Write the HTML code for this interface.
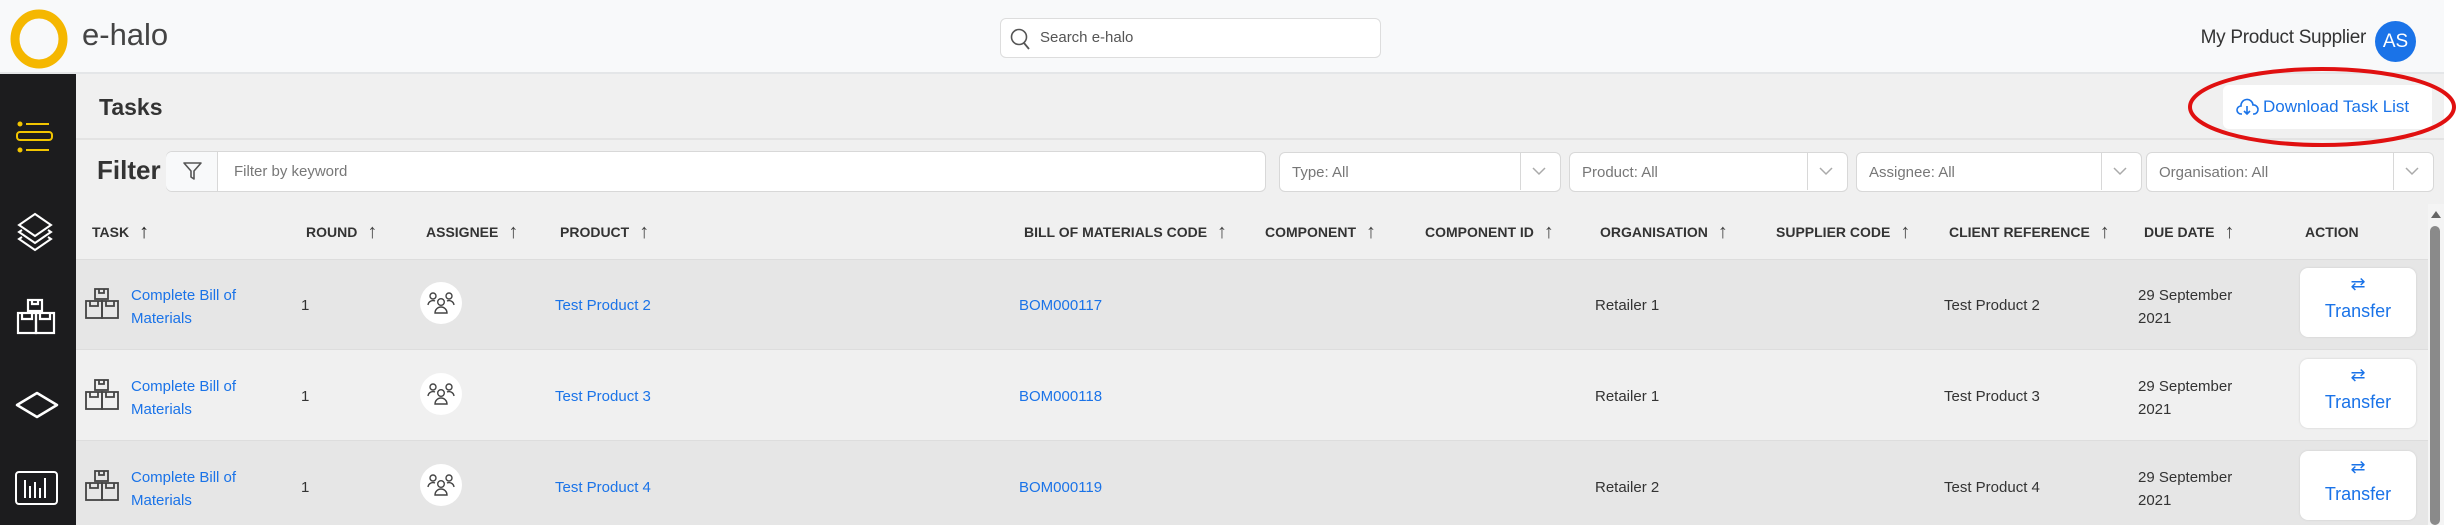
<!DOCTYPE html>
<html><head><meta charset="utf-8"><style>
*{box-sizing:border-box;margin:0;padding:0}
body{width:2460px;height:525px;overflow:hidden;background:#fff;font-family:"Liberation Sans",sans-serif;position:relative;color:#333}
.a{position:absolute}
.hdr{left:0;top:0;width:2444px;height:74px;background:#f8f9fa;border-bottom:2px solid #e4e6e8}
.side{left:0;top:74px;width:76px;height:451px;background:#1c1c1e}
.main{left:76px;top:74px;width:2368px;height:451px;background:#f0f0f0}
.box{background:#fff;border:1.5px solid #d8d8d8;border-radius:6px}
.th{top:220px;height:24px;line-height:24px;font-size:14px;font-weight:bold;color:#333;white-space:nowrap}
.th span{font-weight:normal;font-size:20px;margin-left:10px;color:#444;vertical-align:top}
.lnk{color:#1a73e8;font-size:15px}
.txt{font-size:15px;color:#333}
.sel{top:152px;height:40px}
.sel .t{position:absolute;left:12px;top:11px;font-size:15px;color:#777}
.sel .d{position:absolute;right:0;top:0;width:40px;height:37px;border-left:1.5px solid #d8d8d8}
.tb{left:2300px;width:116px;height:69px;background:#fff;border-radius:8px;box-shadow:0 0 2px #ccc;text-align:center;color:#1a73e8}
</style></head><body>
<div class="a hdr"></div>
<svg class="a" style="left:8px;top:8px" width="62" height="62"><ellipse cx="31" cy="31" rx="24" ry="25" fill="none" stroke="#f5b700" stroke-width="9"/></svg>
<div class="a" style="left:82px;top:17px;font-size:31px;color:#444">e-halo</div>
<div class="a box" style="left:1000px;top:18px;width:381px;height:40px;border-color:#ddd"></div>
<svg class="a" style="left:1009px;top:27px" width="22" height="24"><circle cx="10" cy="10" r="7.5" fill="none" stroke="#555" stroke-width="1.6"/><path d="M15 16l5 6" stroke="#555" stroke-width="1.8"/></svg>
<div class="a" style="left:1040px;top:29px;font-size:15px;color:#555">Search e-halo</div>
<div class="a" style="left:2100px;width:266px;text-align:right;top:27px;font-size:19px;color:#333;letter-spacing:-0.3px">My Product Supplier</div>
<div class="a" style="left:2375px;top:21px;width:41px;height:41px;border-radius:50%;background:#1a73e8;color:#fff;font-size:19px;text-align:center;line-height:41px">AS</div>

<div class="a side"></div>
<svg class="a" style="left:14px;top:120px" width="46" height="34" fill="none" stroke="#f2c500" stroke-width="2"><circle cx="6" cy="4" r="1.5" fill="#f2c500"/><path d="M12 4h23"/><rect x="3" y="12" width="35" height="8" rx="3"/><circle cx="6" cy="30" r="1.5" fill="#f2c500"/><path d="M12 30h23"/></svg>
<svg class="a" style="left:15px;top:210px" width="44" height="42" fill="none" stroke="#fff" stroke-width="2"><path d="M20 4L36 15 20 26 4 15z"/><path d="M7 20L4 22 20 33 36 22 33 20"/><path d="M7 27L4 29 20 40 36 29 33 27"/></svg>
<svg class="a" style="left:16px;top:298px" width="42" height="38" fill="none" stroke="#fff" stroke-width="2.2"><rect x="12" y="2" width="14" height="11"/><path d="M16 2v4h6V2"/><rect x="2" y="15" width="18" height="20"/><rect x="20" y="15" width="18" height="20"/><path d="M6 15v6h10v-6M24 15v6h10v-6"/></svg>
<svg class="a" style="left:14px;top:390px" width="46" height="30" fill="none" stroke="#fff" stroke-width="2.5"><path d="M23 3L43 15 23 27 3 15z" stroke-linejoin="round"/></svg>
<svg class="a" style="left:14px;top:470px" width="46" height="36" fill="none" stroke="#fff" stroke-width="2"><rect x="2" y="2" width="41" height="32" rx="3"/><path d="M11 10v18M16 16v12M21 12v16M26 18v10M31 8v20"/></svg>

<div class="a main"></div>
<div class="a" style="left:76px;top:138px;width:2368px;height:2px;background:#e3e3e3"></div>
<div class="a" style="left:99px;top:94px;font-size:23px;font-weight:bold;color:#333">Tasks</div>
<div class="a" style="left:2223px;top:85px;width:209px;height:44px;background:#fff;border-radius:6px;color:#1a73e8;font-size:17px;line-height:44px;padding-left:40px">Download Task List</div>
<svg class="a" style="left:2236px;top:97px" width="24" height="20" fill="none" stroke="#1a73e8" stroke-width="1.6"><path d="M6 17H5a4 4 0 0 1 0-8 6 6 0 0 1 12-1 4.5 4.5 0 0 1 1 9h-1"/><path d="M11 9v8M8 14l3 3 3-3"/></svg>
<svg class="a" style="left:2186px;top:65px" width="272" height="85"><ellipse cx="136" cy="42" rx="132" ry="38" fill="none" stroke="#e01010" stroke-width="4"/></svg>

<div class="a" style="left:97px;top:155px;font-size:26px;font-weight:bold;color:#333">Filter</div>
<div class="a box" style="left:166px;top:151px;width:1100px;height:41px"></div>
<div class="a" style="left:166px;top:152px;width:52px;height:39px;background:#f8f9fa;border-right:1.5px solid #d8d8d8;border-radius:6px 0 0 6px"></div>
<svg class="a" style="left:182px;top:160px" width="22" height="22" fill="none" stroke="#555" stroke-width="1.6"><path d="M2 3h17l-7 8v8l-3-2v-6z" stroke-linejoin="round"/></svg>
<div class="a" style="left:234px;top:163px;font-size:15px;color:#777">Filter by keyword</div>
<div class="a box sel" style="left:1279px;width:282px"><div class="t">Type: All</div><div class="d"></div></div>
<div class="a box sel" style="left:1569px;width:279px"><div class="t">Product: All</div><div class="d"></div></div>
<div class="a box sel" style="left:1856px;width:286px"><div class="t">Assignee: All</div><div class="d"></div></div>
<div class="a box sel" style="left:2146px;width:288px"><div class="t">Organisation: All</div><div class="d"></div></div>
<svg class="a" style="left:1531px;top:165px" width="16" height="12"><path d="M2 3l6 6 6-6" fill="none" stroke="#aaa" stroke-width="1.5"/></svg>
<svg class="a" style="left:1818px;top:165px" width="16" height="12"><path d="M2 3l6 6 6-6" fill="none" stroke="#aaa" stroke-width="1.5"/></svg>
<svg class="a" style="left:2112px;top:165px" width="16" height="12"><path d="M2 3l6 6 6-6" fill="none" stroke="#aaa" stroke-width="1.5"/></svg>
<svg class="a" style="left:2404px;top:165px" width="16" height="12"><path d="M2 3l6 6 6-6" fill="none" stroke="#aaa" stroke-width="1.5"/></svg>

<div class="a th" style="left:92px">TASK<span style="color:#222">↑</span></div>
<div class="a th" style="left:306px">ROUND<span>↑</span></div>
<div class="a th" style="left:426px">ASSIGNEE<span>↑</span></div>
<div class="a th" style="left:560px">PRODUCT<span>↑</span></div>
<div class="a th" style="left:1024px">BILL OF MATERIALS CODE<span>↑</span></div>
<div class="a th" style="left:1265px">COMPONENT<span>↑</span></div>
<div class="a th" style="left:1425px">COMPONENT ID<span>↑</span></div>
<div class="a th" style="left:1600px">ORGANISATION<span>↑</span></div>
<div class="a th" style="left:1776px">SUPPLIER CODE<span>↑</span></div>
<div class="a th" style="left:1949px">CLIENT REFERENCE<span>↑</span></div>
<div class="a th" style="left:2144px">DUE DATE<span>↑</span></div>
<div class="a th" style="left:2305px">ACTION</div>

<div class="a" style="left:76px;top:259px;width:2354px;height:90px;background:#e6e6e6;border-top:1.5px solid #ddd"></div>
<div class="a" style="left:76px;top:349px;width:2354px;height:91px;background:#f0f0f0;border-top:1.5px solid #ddd"></div>
<div class="a" style="left:76px;top:440px;width:2354px;height:85px;background:#e6e6e6;border-top:1.5px solid #ddd"></div>

<svg class="a" style="left:85px;top:288px" width="38" height="32" fill="none" stroke="#444" stroke-width="1.8"><rect x="10" y="1" width="13" height="10"/><path d="M14 1v4h5V1"/><rect x="1" y="13" width="16" height="17"/><rect x="17" y="13" width="16" height="17"/><path d="M5 13v5h8v-5M21 13v5h8v-5"/></svg>
<svg class="a" style="left:85px;top:379px" width="38" height="32" fill="none" stroke="#444" stroke-width="1.8"><rect x="10" y="1" width="13" height="10"/><path d="M14 1v4h5V1"/><rect x="1" y="13" width="16" height="17"/><rect x="17" y="13" width="16" height="17"/><path d="M5 13v5h8v-5M21 13v5h8v-5"/></svg>
<svg class="a" style="left:85px;top:470px" width="38" height="32" fill="none" stroke="#444" stroke-width="1.8"><rect x="10" y="1" width="13" height="10"/><path d="M14 1v4h5V1"/><rect x="1" y="13" width="16" height="17"/><rect x="17" y="13" width="16" height="17"/><path d="M5 13v5h8v-5M21 13v5h8v-5"/></svg>

<div class="a lnk" style="left:131px;top:284px;line-height:23px">Complete Bill of<br>Materials</div>
<div class="a lnk" style="left:131px;top:375px;line-height:23px">Complete Bill of<br>Materials</div>
<div class="a lnk" style="left:131px;top:466px;line-height:23px">Complete Bill of<br>Materials</div>

<div class="a txt" style="left:301px;top:297px">1</div>
<div class="a txt" style="left:301px;top:388px">1</div>
<div class="a txt" style="left:301px;top:479px">1</div>

<svg class="a" style="left:420px;top:282px" width="42" height="42"><circle cx="21" cy="21" r="21" fill="#fff"/><g fill="none" stroke="#444" stroke-width="1.4"><circle cx="13" cy="14" r="3"/><circle cx="29" cy="14" r="3"/><circle cx="21" cy="20" r="3.3"/><path d="M8 23a5 5 0 0 1 7-4M34 23a5 5 0 0 0-7-4M15 31a6 6 0 0 1 12 0z"/></g></svg>
<svg class="a" style="left:420px;top:373px" width="42" height="42"><circle cx="21" cy="21" r="21" fill="#fff"/><g fill="none" stroke="#444" stroke-width="1.4"><circle cx="13" cy="14" r="3"/><circle cx="29" cy="14" r="3"/><circle cx="21" cy="20" r="3.3"/><path d="M8 23a5 5 0 0 1 7-4M34 23a5 5 0 0 0-7-4M15 31a6 6 0 0 1 12 0z"/></g></svg>
<svg class="a" style="left:420px;top:464px" width="42" height="42"><circle cx="21" cy="21" r="21" fill="#fff"/><g fill="none" stroke="#444" stroke-width="1.4"><circle cx="13" cy="14" r="3"/><circle cx="29" cy="14" r="3"/><circle cx="21" cy="20" r="3.3"/><path d="M8 23a5 5 0 0 1 7-4M34 23a5 5 0 0 0-7-4M15 31a6 6 0 0 1 12 0z"/></g></svg>

<div class="a lnk" style="left:555px;top:297px">Test Product 2</div>
<div class="a lnk" style="left:555px;top:388px">Test Product 3</div>
<div class="a lnk" style="left:555px;top:479px">Test Product 4</div>
<div class="a lnk" style="left:1019px;top:297px">BOM000117</div>
<div class="a lnk" style="left:1019px;top:388px">BOM000118</div>
<div class="a lnk" style="left:1019px;top:479px">BOM000119</div>
<div class="a txt" style="left:1595px;top:297px">Retailer 1</div>
<div class="a txt" style="left:1595px;top:388px">Retailer 1</div>
<div class="a txt" style="left:1595px;top:479px">Retailer 2</div>
<div class="a txt" style="left:1944px;top:297px">Test Product 2</div>
<div class="a txt" style="left:1944px;top:388px">Test Product 3</div>
<div class="a txt" style="left:1944px;top:479px">Test Product 4</div>
<div class="a txt" style="left:2138px;top:284px;line-height:23px">29 September<br>2021</div>
<div class="a txt" style="left:2138px;top:375px;line-height:23px">29 September<br>2021</div>
<div class="a txt" style="left:2138px;top:466px;line-height:23px">29 September<br>2021</div>

<div class="a tb" style="top:268px"><div style="font-size:18px;padding-top:6px">⇄</div><div style="font-size:18px;margin-top:6px">Transfer</div></div>
<div class="a tb" style="top:359px"><div style="font-size:18px;padding-top:6px">⇄</div><div style="font-size:18px;margin-top:6px">Transfer</div></div>
<div class="a tb" style="top:451px"><div style="font-size:18px;padding-top:6px">⇄</div><div style="font-size:18px;margin-top:6px">Transfer</div></div>

<div class="a" style="left:2428px;top:204px;width:16px;height:321px;background:#f4f4f4"></div>
<svg class="a" style="left:2430px;top:210px" width="12" height="10"><path d="M1 8l5-7 5 7z" fill="#666"/></svg>
<div class="a" style="left:2430px;top:226px;width:10px;height:299px;background:#8a8a8a;border-radius:5px"></div>
</body></html>
